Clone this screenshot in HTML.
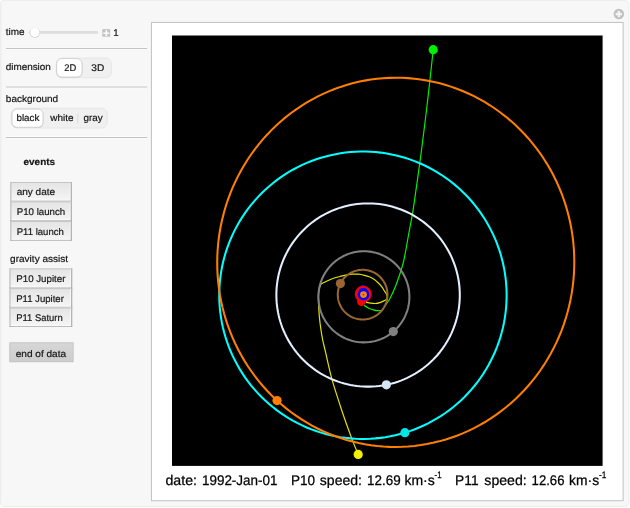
<!DOCTYPE html>
<html><head><meta charset="utf-8"><title>Pioneer 10 and 11</title>
<style>
html,body{margin:0;padding:0;background:#fff;}
body{width:630px;height:508px;position:relative;overflow:hidden;font-family:"Liberation Sans",Arial,sans-serif;}
.abs{position:absolute;box-sizing:border-box;}
</style></head><body>
<svg width="630" height="508" viewBox="0 0 630 508" style="position:absolute;left:0;top:0;will-change:transform">
<defs><clipPath id="pc"><rect x="172" y="35.5" width="430.6" height="430.4"/></clipPath><linearGradient id="bg" x1="0" y1="0" x2="0" y2="1"><stop offset="0" stop-color="#fbfbfb"/><stop offset="1" stop-color="#ebebeb"/></linearGradient></defs>
<rect x="0.45" y="0.4" width="628.3" height="506.1" rx="3.5" fill="#f7f7f7" stroke="#ebebeb" stroke-width="0.9"/>
<rect x="0.3" y="4" width="1.4" height="499" fill="#efefef"/>
<rect x="151.45" y="22.45" width="471.65" height="478.25" fill="#ffffff" stroke="#c4c4c4" stroke-width="1.05"/>
<rect x="172" y="35.5" width="430.6" height="430.4" fill="#000"/>
<g clip-path="url(#pc)" fill="none">
<circle cx="362.99" cy="289.72" r="4.4" fill="#0000ff"/>
<path d="M369.83 297.03 L370.10 296.32 L370.30 295.59 L370.42 294.84 L370.45 294.08 L370.41 293.32 L370.29 292.57 L370.09 291.83 L369.82 291.13 L369.47 290.45 L369.05 289.81 L368.57 289.22 L368.03 288.68 L367.44 288.21 L366.80 287.79 L366.12 287.45 L365.41 287.17 L364.67 286.98 L363.92 286.86 L363.16 286.82 L362.40 286.86 L361.65 286.98 L360.91 287.17 L360.20 287.45 L359.53 287.79 L358.89 288.20 L358.30 288.68 L357.76 289.22 L357.28 289.81 L356.87 290.44 L356.52 291.12 L356.25 291.83 L356.06 292.56 L355.94 293.31 L355.90 294.07 L355.94 294.83 L356.07 295.58 L356.26 296.31 L356.54 297.02 L356.89 297.70 L357.30 298.34 L357.78 298.93 L358.32 299.46 L358.92 299.94 L359.56 300.36 L360.23 300.70 L360.95 300.97 L361.68 301.17 L362.44 301.29 L363.20 301.33 L363.96 301.29 L364.71 301.17 L365.44 300.98 L366.15 300.70 L366.83 300.36 L367.47 299.95 L368.06 299.47 L368.60 298.93 L369.07 298.34 L369.49 297.70Z" fill="#ff0000"/>
<circle cx="361.30" cy="301.70" r="4.2" fill="#ff0000"/>
<circle cx="362.99" cy="289.72" r="4.4" fill="#0000ff"/>
<path d="M369.83 297.03 L370.10 296.32 L370.30 295.59 L370.42 294.84 L370.45 294.08 L370.41 293.32 L370.29 292.57 L370.09 291.83 L369.82 291.13 L369.47 290.45 L369.05 289.81 L368.57 289.22 L368.03 288.68 L367.44 288.21 L366.80 287.79 L366.12 287.45 L365.41 287.17 L364.67 286.98 L363.92 286.86 L363.16 286.82 L362.40 286.86 L361.65 286.98 L360.91 287.17 L360.20 287.45 L359.53 287.79 L358.89 288.20 L358.30 288.68 L357.76 289.22 L357.28 289.81 L356.87 290.44 L356.52 291.12 L356.25 291.83 L356.06 292.56 L355.94 293.31 L355.90 294.07 L355.94 294.83 L356.07 295.58 L356.26 296.31 L356.54 297.02 L356.89 297.70 L357.30 298.34 L357.78 298.93 L358.32 299.46 L358.92 299.94 L359.56 300.36 L360.23 300.70 L360.95 300.97 L361.68 301.17 L362.44 301.29 L363.20 301.33 L363.96 301.29 L364.71 301.17 L365.44 300.98 L366.15 300.70 L366.83 300.36 L367.47 299.95 L368.06 299.47 L368.60 298.93 L369.07 298.34 L369.49 297.70Z" stroke="#ff0000" stroke-width="2.1"/>
<circle cx="363.50" cy="294.55" r="5.85" fill="#0000ff"/>
<circle cx="363.50" cy="294.55" r="3.4" fill="#ff8000"/>
<circle cx="363.50" cy="294.55" r="0.9" fill="#5a3fd8"/>
<path d="M363.90 305.20 C364.80 305.75 367.62 307.68 369.30 308.50 C370.98 309.32 372.55 309.73 374.00 310.10 C375.45 310.47 376.73 310.62 378.00 310.70 C379.27 310.78 381.00 310.62 381.60 310.60" stroke="#00f000" stroke-width="1.2"/>
<path d="M381.60 310.60 C381.90 310.27 382.82 309.42 383.40 308.60 C383.98 307.78 384.40 306.77 385.10 305.70 C385.80 304.63 386.82 303.35 387.60 302.20 C388.38 301.05 389.28 299.68 389.80 298.80 C390.32 297.92 389.90 298.60 390.70 296.90 C391.50 295.20 393.18 292.08 394.60 288.60 C396.02 285.12 397.93 279.68 399.20 276.00 C400.47 272.32 401.42 269.17 402.20 266.50 C402.98 263.83 403.20 263.25 403.90 260.00 C404.60 256.75 405.62 251.25 406.40 247.00 C407.18 242.75 407.57 240.13 408.60 234.50 C409.63 228.87 411.30 221.08 412.60 213.20 C413.90 205.32 415.22 195.47 416.40 187.20 C417.58 178.93 418.63 171.47 419.70 163.60 C420.77 155.73 421.67 148.93 422.80 140.00 C423.93 131.07 425.30 120.10 426.50 110.00 C427.70 99.90 428.88 89.45 430.00 79.40 C431.12 69.35 432.67 54.65 433.20 49.70" stroke="#00f000" stroke-width="1.2"/>
<path d="M365.90 302.20 C366.65 302.35 368.85 302.88 370.40 303.10 C371.95 303.32 373.62 303.58 375.20 303.50 C376.78 303.42 378.53 303.00 379.90 302.60 C381.27 302.20 382.22 301.67 383.40 301.10 C384.58 300.53 386.40 299.52 387.00 299.20" stroke="#e2e200" stroke-width="1.2"/>
<path d="M387.00 299.20 C387.03 298.82 387.37 297.88 387.20 296.90 C387.03 295.92 386.53 294.42 386.00 293.30 C385.47 292.18 384.72 291.32 384.00 290.20 C383.28 289.08 382.68 287.85 381.70 286.60 C380.72 285.35 379.38 283.93 378.10 282.70 C376.82 281.47 375.47 280.18 374.00 279.20 C372.53 278.22 370.88 277.45 369.30 276.80 C367.72 276.15 366.28 275.73 364.50 275.30 C362.72 274.87 360.57 274.38 358.60 274.20 C356.63 274.02 354.67 274.08 352.70 274.20 C350.73 274.32 348.77 274.57 346.80 274.90 C344.83 275.23 342.87 275.72 340.90 276.20 C338.93 276.68 337.30 277.00 335.00 277.80 C332.70 278.60 329.42 279.98 327.10 281.00 C324.78 282.02 322.10 283.42 321.10 283.90" stroke="#e2e200" stroke-width="1.2"/>
<path d="M321.20 283.80 C320.95 284.33 320.08 285.88 319.70 287.00 C319.32 288.12 319.10 289.33 318.90 290.50 C318.70 291.67 318.58 292.92 318.50 294.00 C318.42 295.08 318.40 295.83 318.40 297.00 C318.40 298.17 318.47 299.63 318.50 301.00 C318.53 302.37 318.43 302.32 318.60 305.20 C318.77 308.08 319.12 314.28 319.50 318.30 C319.88 322.32 320.37 325.68 320.90 329.30 C321.43 332.92 322.00 336.52 322.70 340.00 C323.40 343.48 323.58 343.75 325.10 350.20 C326.62 356.65 329.02 368.65 331.80 378.70 C334.58 388.75 338.45 400.47 341.80 410.50 C345.15 420.53 349.17 431.58 351.90 438.90 C354.63 446.22 357.15 451.82 358.20 454.40" stroke="#e2e200" stroke-width="1.2"/>
<path d="M386.68 288.33 L386.45 287.50 L386.18 286.67 L385.89 285.86 L385.57 285.05 L385.22 284.26 L384.84 283.48 L384.44 282.71 L384.01 281.96 L383.55 281.22 L383.07 280.50 L382.57 279.79 L382.04 279.11 L381.48 278.44 L380.90 277.80 L380.30 277.17 L379.68 276.56 L379.04 275.98 L378.38 275.42 L377.70 274.88 L377.00 274.37 L376.28 273.88 L375.55 273.42 L374.80 272.98 L374.03 272.57 L373.26 272.19 L372.46 271.83 L371.66 271.50 L370.85 271.20 L370.02 270.93 L369.19 270.69 L368.35 270.48 L367.50 270.29 L366.65 270.14 L365.79 270.01 L364.93 269.92 L364.06 269.85 L363.19 269.82 L362.33 269.82 L361.46 269.84 L360.59 269.90 L359.73 269.99 L358.87 270.10 L358.01 270.25 L357.16 270.43 L356.32 270.63 L355.49 270.87 L354.66 271.13 L353.84 271.42 L353.04 271.74 L352.24 272.09 L351.46 272.47 L350.69 272.87 L349.94 273.30 L349.20 273.76 L348.48 274.24 L347.77 274.75 L347.09 275.28 L346.42 275.83 L345.77 276.41 L345.14 277.01 L344.54 277.63 L343.95 278.27 L343.39 278.94 L342.86 279.62 L342.34 280.32 L341.85 281.03 L341.39 281.77 L340.95 282.51 L340.54 283.28 L340.16 284.06 L339.80 284.85 L339.47 285.65 L339.17 286.46 L338.90 287.29 L338.65 288.12 L338.44 288.96 L338.26 289.81 L338.10 290.66 L337.98 291.52 L337.88 292.38 L337.82 293.24 L337.78 294.11 L337.78 294.98 L337.80 295.84 L337.86 296.71 L337.95 297.57 L338.06 298.43 L338.21 299.29 L338.38 300.14 L338.59 300.98 L338.83 301.81 L339.09 302.64 L339.38 303.45 L339.70 304.26 L340.05 305.05 L340.43 305.83 L340.83 306.60 L341.26 307.35 L341.72 308.09 L342.20 308.81 L342.71 309.52 L343.24 310.20 L343.79 310.87 L344.37 311.52 L344.97 312.14 L345.59 312.75 L346.23 313.33 L346.89 313.89 L347.58 314.43 L348.28 314.94 L348.99 315.43 L349.73 315.89 L350.48 316.33 L351.24 316.74 L352.02 317.12 L352.81 317.48 L353.61 317.81 L354.43 318.11 L355.25 318.38 L356.08 318.62 L356.92 318.84 L357.77 319.02 L358.63 319.17 L359.48 319.30 L360.35 319.39 L361.21 319.46 L362.08 319.49 L362.95 319.50 L363.81 319.47 L364.68 319.41 L365.54 319.33 L366.40 319.21 L367.26 319.06 L368.11 318.89 L368.95 318.68 L369.79 318.45 L370.61 318.18 L371.43 317.89 L372.24 317.57 L373.03 317.22 L373.81 316.84 L374.58 316.44 L375.33 316.01 L376.07 315.55 L376.79 315.07 L377.50 314.56 L378.19 314.03 L378.85 313.48 L379.50 312.90 L380.13 312.30 L380.73 311.68 L381.32 311.04 L381.88 310.38 L382.42 309.70 L382.93 309.00 L383.42 308.28 L383.88 307.55 L384.32 306.80 L384.73 306.03 L385.12 305.26 L385.47 304.47 L385.80 303.66 L386.10 302.85 L386.38 302.03 L386.62 301.19 L386.83 300.35 L387.02 299.51 L387.17 298.65 L387.30 297.79 L387.39 296.93 L387.46 296.07 L387.49 295.20 L387.50 294.33 L387.47 293.47 L387.41 292.60 L387.33 291.74 L387.21 290.88 L387.06 290.03 L386.89 289.18Z" stroke="#996633" stroke-width="2.05"/>
<circle cx="340.41" cy="283.54" r="4.6" fill="#996633"/>
<path d="M361.83 251.27 L360.25 251.37 L358.67 251.52 L357.09 251.73 L355.53 252.00 L353.97 252.32 L352.43 252.69 L350.90 253.12 L349.39 253.60 L347.89 254.13 L346.42 254.72 L344.96 255.35 L343.53 256.04 L342.12 256.78 L340.74 257.56 L339.39 258.39 L338.07 259.27 L336.78 260.20 L335.52 261.17 L334.30 262.18 L333.11 263.24 L331.96 264.34 L330.85 265.47 L329.78 266.65 L328.75 267.86 L327.77 269.10 L326.83 270.38 L325.93 271.70 L325.08 273.04 L324.28 274.41 L323.52 275.81 L322.82 277.23 L322.16 278.68 L321.56 280.15 L321.01 281.64 L320.50 283.15 L320.06 284.68 L319.66 286.22 L319.32 287.77 L319.04 289.34 L318.81 290.91 L318.63 292.49 L318.51 294.08 L318.44 295.67 L318.43 297.26 L318.48 298.85 L318.58 300.44 L318.73 302.02 L318.94 303.60 L319.21 305.17 L319.53 306.73 L319.90 308.27 L320.33 309.80 L320.81 311.32 L321.34 312.82 L321.93 314.30 L322.56 315.76 L323.25 317.19 L323.99 318.60 L324.77 319.99 L325.60 321.34 L326.48 322.67 L327.41 323.96 L328.38 325.22 L329.39 326.45 L330.44 327.64 L331.54 328.79 L332.67 329.90 L333.85 330.98 L335.06 332.01 L336.30 333.00 L337.58 333.94 L338.89 334.84 L340.23 335.70 L341.60 336.50 L343.00 337.26 L344.42 337.97 L345.86 338.62 L347.33 339.23 L348.82 339.79 L350.33 340.29 L351.85 340.74 L353.39 341.14 L354.94 341.48 L356.50 341.77 L358.07 342.00 L359.65 342.18 L361.23 342.30 L362.82 342.37 L364.41 342.38 L365.99 342.33 L367.58 342.24 L369.16 342.08 L370.73 341.87 L372.30 341.61 L373.85 341.29 L375.39 340.91 L376.92 340.49 L378.44 340.01 L379.93 339.47 L381.41 338.89 L382.86 338.25 L384.29 337.57 L385.70 336.83 L387.08 336.04 L388.43 335.21 L389.75 334.33 L391.04 333.41 L392.30 332.44 L393.53 331.42 L394.71 330.37 L395.86 329.27 L396.97 328.13 L398.04 326.96 L399.07 325.75 L400.06 324.50 L401.00 323.22 L401.89 321.91 L402.74 320.57 L403.55 319.19 L404.30 317.79 L405.01 316.37 L405.66 314.92 L406.27 313.45 L406.82 311.96 L407.32 310.45 L407.77 308.92 L408.16 307.38 L408.50 305.83 L408.79 304.27 L409.02 302.69 L409.20 301.11 L409.32 299.53 L409.38 297.94 L409.39 296.34 L409.35 294.75 L409.25 293.17 L409.09 291.58 L408.88 290.01 L408.62 288.44 L408.30 286.88 L407.92 285.33 L407.49 283.80 L407.01 282.28 L406.48 280.78 L405.90 279.31 L405.26 277.85 L404.57 276.41 L403.84 275.00 L403.05 273.62 L402.22 272.26 L401.34 270.94 L400.42 269.64 L399.45 268.38 L398.43 267.16 L397.38 265.97 L396.28 264.81 L395.15 263.70 L393.98 262.63 L392.77 261.60 L391.52 260.61 L390.25 259.66 L388.93 258.76 L387.59 257.91 L386.22 257.10 L384.83 256.35 L383.41 255.64 L381.96 254.98 L380.49 254.37 L379.00 253.82 L377.50 253.32 L375.97 252.87 L374.44 252.47 L372.88 252.13 L371.32 251.84 L369.75 251.61 L368.17 251.43 L366.59 251.31 L365.01 251.24 L363.42 251.23Z" stroke="#808080" stroke-width="2.05"/>
<circle cx="393.32" cy="331.60" r="4.6" fill="#808080"/>
<path d="M277.50 280.61 L277.06 283.78 L276.72 286.96 L276.50 290.15 L276.38 293.35 L276.38 296.54 L276.49 299.74 L276.71 302.93 L277.04 306.11 L277.49 309.28 L278.04 312.43 L278.70 315.56 L279.48 318.66 L280.36 321.74 L281.34 324.78 L282.44 327.79 L283.63 330.75 L284.93 333.67 L286.34 336.55 L287.84 339.38 L289.44 342.15 L291.13 344.86 L292.92 347.51 L294.80 350.10 L296.77 352.62 L298.82 355.08 L300.96 357.46 L303.19 359.76 L305.49 361.98 L307.87 364.12 L310.32 366.18 L312.84 368.15 L315.43 370.04 L318.08 371.83 L320.79 373.52 L323.56 375.13 L326.39 376.63 L329.27 378.03 L332.19 379.34 L335.16 380.54 L338.16 381.63 L341.21 382.63 L344.29 383.51 L347.39 384.29 L350.52 384.96 L353.67 385.51 L356.84 385.96 L360.03 386.30 L363.22 386.52 L366.42 386.64 L369.62 386.64 L372.82 386.53 L376.01 386.31 L379.20 385.98 L382.37 385.54 L385.52 384.99 L388.65 384.33 L391.76 383.56 L394.84 382.68 L397.88 381.69 L400.89 380.60 L403.86 379.41 L406.79 378.11 L409.66 376.71 L412.49 375.21 L415.27 373.61 L417.98 371.92 L420.64 370.13 L423.23 368.26 L425.75 366.29 L428.21 364.24 L430.59 362.10 L432.89 359.88 L435.12 357.58 L437.26 355.21 L439.32 352.76 L441.29 350.24 L443.17 347.66 L444.97 345.01 L446.66 342.30 L448.27 339.53 L449.77 336.70 L451.18 333.83 L452.48 330.91 L453.68 327.95 L454.78 324.94 L455.77 321.90 L456.65 318.83 L457.43 315.73 L458.10 312.60 L458.66 309.45 L459.10 306.28 L459.44 303.10 L459.67 299.91 L459.78 296.72 L459.78 293.52 L459.67 290.32 L459.45 287.13 L459.12 283.95 L458.67 280.78 L458.12 277.63 L457.46 274.51 L456.68 271.40 L455.80 268.33 L454.82 265.28 L453.72 262.28 L452.53 259.31 L451.23 256.39 L449.83 253.51 L448.32 250.69 L446.73 247.92 L445.03 245.20 L443.24 242.55 L441.36 239.96 L439.39 237.44 L437.34 234.99 L435.20 232.61 L432.97 230.31 L430.67 228.08 L428.30 225.94 L425.84 223.88 L423.32 221.91 L420.73 220.03 L418.08 218.24 L415.37 216.54 L412.60 214.94 L409.77 213.43 L406.89 212.03 L403.97 210.73 L401.00 209.52 L398.00 208.43 L394.95 207.44 L391.88 206.55 L388.77 205.78 L385.64 205.11 L382.49 204.55 L379.32 204.10 L376.13 203.76 L372.94 203.54 L369.74 203.42 L366.54 203.42 L363.34 203.53 L360.15 203.75 L356.96 204.08 L353.79 204.52 L350.64 205.07 L347.51 205.74 L344.40 206.51 L341.32 207.39 L338.28 208.37 L335.27 209.46 L332.30 210.66 L329.37 211.96 L326.50 213.35 L323.67 214.85 L320.90 216.45 L318.18 218.14 L315.52 219.93 L312.93 221.81 L310.41 223.77 L307.96 225.83 L305.58 227.96 L303.27 230.18 L301.05 232.48 L298.90 234.86 L296.84 237.30 L294.87 239.82 L292.99 242.41 L291.19 245.06 L289.50 247.77 L287.89 250.54 L286.39 253.36 L284.98 256.23 L283.68 259.15 L282.48 262.12 L281.38 265.12 L280.39 268.16 L279.51 271.23 L278.73 274.34 L278.06 277.46Z" stroke="#e3efff" stroke-width="2.05"/>
<circle cx="386.36" cy="384.82" r="4.6" fill="#d6e6f7"/>
<path d="M464.57 193.69 L460.97 190.21 L457.24 186.85 L453.40 183.62 L449.45 180.53 L445.39 177.58 L441.24 174.77 L436.98 172.11 L432.64 169.60 L428.21 167.24 L423.71 165.04 L419.12 162.99 L414.48 161.11 L409.76 159.39 L404.99 157.84 L400.17 156.45 L395.31 155.23 L390.40 154.18 L385.46 153.31 L380.50 152.61 L375.51 152.08 L370.50 151.72 L365.49 151.55 L360.48 151.54 L355.46 151.71 L350.46 152.06 L345.47 152.58 L340.50 153.27 L335.56 154.14 L330.66 155.18 L325.79 156.39 L320.97 157.77 L316.20 159.31 L311.48 161.02 L306.83 162.90 L302.25 164.93 L297.74 167.13 L293.31 169.48 L288.97 171.98 L284.71 174.64 L280.55 177.44 L276.50 180.39 L272.54 183.47 L268.70 186.69 L264.97 190.04 L261.36 193.53 L257.87 197.13 L254.52 200.86 L251.29 204.70 L248.20 208.65 L245.25 212.70 L242.45 216.86 L239.79 221.11 L237.28 225.45 L234.92 229.88 L232.72 234.38 L230.68 238.96 L228.80 243.61 L227.08 248.32 L225.53 253.09 L224.14 257.91 L222.93 262.78 L221.88 267.69 L221.01 272.62 L220.31 277.59 L219.79 282.58 L219.43 287.58 L219.26 292.59 L219.25 297.61 L219.43 302.62 L219.78 307.63 L220.30 312.62 L220.99 317.58 L221.86 322.52 L222.90 327.43 L224.11 332.30 L225.50 337.12 L227.04 341.89 L228.76 346.61 L230.63 351.26 L232.67 355.84 L234.87 360.35 L237.22 364.79 L239.73 369.13 L242.38 373.39 L245.19 377.55 L248.13 381.61 L251.22 385.56 L254.44 389.41 L257.80 393.14 L261.28 396.75 L264.89 400.24 L268.61 403.60 L272.45 406.82 L276.40 409.91 L280.46 412.87 L284.62 415.67 L288.87 418.34 L293.21 420.85 L297.64 423.21 L302.15 425.41 L306.73 427.45 L311.38 429.34 L316.09 431.06 L320.86 432.61 L325.68 434.00 L330.55 435.21 L335.45 436.26 L340.39 437.14 L345.36 437.84 L350.35 438.37 L355.35 438.72 L360.36 438.90 L365.38 438.90 L370.39 438.73 L375.39 438.39 L380.38 437.87 L385.35 437.17 L390.29 436.31 L395.20 435.27 L400.06 434.06 L404.88 432.68 L409.65 431.13 L414.37 429.42 L419.02 427.55 L423.60 425.51 L428.11 423.32 L432.54 420.96 L436.89 418.46 L441.14 415.81 L445.30 413.00 L449.36 410.06 L453.31 406.97 L457.16 403.75 L460.88 400.40 L464.49 396.92 L467.98 393.31 L471.34 389.59 L474.56 385.75 L477.65 381.80 L480.60 377.74 L483.41 373.59 L486.07 369.34 L488.58 364.99 L490.93 360.57 L493.13 356.06 L495.18 351.48 L497.06 346.83 L498.77 342.12 L500.32 337.35 L501.71 332.53 L502.92 327.66 L503.97 322.76 L504.84 317.82 L505.54 312.85 L506.07 307.87 L506.42 302.86 L506.60 297.85 L506.60 292.83 L506.43 287.82 L506.08 282.82 L505.56 277.83 L504.86 272.86 L503.99 267.92 L502.95 263.01 L501.74 258.15 L500.36 253.32 L498.81 248.55 L497.10 243.84 L495.22 239.18 L493.18 234.60 L490.98 230.09 L488.63 225.66 L486.13 221.31 L483.47 217.06 L480.67 212.90 L477.72 208.84 L474.63 204.88 L471.41 201.04 L468.06 197.31Z" stroke="#00ffff" stroke-width="2.05"/>
<circle cx="404.89" cy="432.68" r="4.6" fill="#00e6e6"/>
<path d="M267.35 390.95 L271.75 395.50 L276.31 399.88 L281.02 404.09 L285.86 408.14 L290.84 412.00 L295.95 415.68 L301.17 419.18 L306.52 422.48 L311.97 425.59 L317.52 428.50 L323.17 431.21 L328.91 433.71 L334.73 436.01 L340.62 438.09 L346.58 439.96 L352.60 441.61 L358.67 443.04 L364.79 444.25 L370.95 445.25 L377.13 446.01 L383.34 446.56 L389.57 446.88 L395.80 446.97 L402.03 446.85 L408.25 446.49 L414.46 445.91 L420.65 445.11 L426.80 444.09 L432.92 442.84 L438.99 441.37 L445.01 439.69 L450.97 437.79 L456.86 435.67 L462.68 433.35 L468.42 430.82 L474.06 428.08 L479.62 425.14 L485.07 422.00 L490.41 418.66 L495.63 415.14 L500.74 411.43 L505.71 407.54 L510.56 403.47 L515.26 399.23 L519.82 394.82 L524.22 390.25 L528.47 385.53 L532.56 380.65 L536.48 375.63 L540.23 370.48 L543.80 365.19 L547.19 359.77 L550.40 354.24 L553.42 348.60 L556.25 342.85 L558.88 337.00 L561.32 331.06 L563.55 325.04 L565.58 318.94 L567.40 312.77 L569.01 306.54 L570.41 300.26 L571.60 293.93 L572.57 287.56 L573.33 281.17 L573.87 274.74 L574.19 268.31 L574.30 261.86 L574.19 255.42 L573.86 248.99 L573.32 242.57 L572.56 236.17 L571.58 229.81 L570.39 223.49 L568.99 217.21 L567.37 210.99 L565.55 204.84 L563.52 198.75 L561.28 192.74 L558.84 186.81 L556.21 180.98 L553.38 175.25 L550.36 169.62 L547.14 164.10 L543.75 158.71 L540.17 153.44 L536.42 148.30 L532.50 143.30 L528.41 138.45 L524.16 133.75 L519.75 129.21 L515.19 124.82 L510.48 120.61 L505.64 116.57 L500.66 112.70 L495.55 109.02 L490.33 105.52 L484.98 102.22 L479.53 99.11 L473.98 96.20 L468.33 93.49 L462.59 90.99 L456.77 88.69 L450.88 86.61 L444.92 84.74 L438.90 83.09 L432.83 81.66 L426.71 80.45 L420.55 79.46 L414.37 78.69 L408.16 78.14 L401.93 77.82 L395.70 77.73 L389.47 77.86 L383.25 78.21 L377.04 78.79 L370.85 79.59 L364.70 80.62 L358.58 81.86 L352.51 83.33 L346.49 85.01 L340.53 86.91 L334.64 89.03 L328.82 91.35 L323.08 93.89 L317.44 96.62 L311.88 99.57 L306.43 102.70 L301.09 106.04 L295.87 109.56 L290.76 113.27 L285.79 117.16 L280.94 121.23 L276.24 125.47 L271.69 129.88 L267.28 134.45 L263.03 139.17 L258.94 144.05 L255.02 149.07 L251.27 154.22 L247.70 159.51 L244.31 164.93 L241.10 170.46 L238.08 176.10 L235.25 181.85 L232.62 187.70 L230.18 193.64 L227.95 199.66 L225.92 205.76 L224.10 211.93 L222.49 218.16 L221.09 224.44 L219.90 230.77 L218.93 237.14 L218.17 243.54 L217.63 249.96 L217.31 256.39 L217.20 262.84 L217.31 269.28 L217.64 275.71 L218.18 282.13 L218.94 288.53 L219.92 294.89 L221.11 301.21 L222.52 307.49 L224.13 313.71 L225.95 319.87 L227.98 325.95 L230.22 331.96 L232.66 337.89 L235.29 343.72 L238.12 349.46 L241.15 355.08 L244.36 360.60 L247.75 365.99 L251.33 371.26 L255.08 376.40 L259.00 381.40 L263.09 386.25Z" stroke="#ff7f00" stroke-width="2.05"/>
<circle cx="277.04" cy="400.55" r="4.6" fill="#ff7f00"/>
<circle cx="433.2" cy="49.7" r="4.6" fill="#00f000"/>
<circle cx="358.2" cy="454.4" r="4.6" fill="#f2f200"/>
</g>
<defs><filter id="sh" x="-50%" y="-50%" width="200%" height="200%"><feGaussianBlur stdDeviation="0.7"/></filter></defs>
<rect x="28.8" y="31.1" width="69.4" height="2.7" rx="1.35" fill="#dddddd"/>
<circle cx="34.9" cy="32.8" r="5.0" fill="#000" opacity="0.22" filter="url(#sh)"/>
<circle cx="34.9" cy="32.5" r="4.75" fill="#ffffff"/>
<rect x="102.3" y="29.1" width="7.8" height="7.6" fill="#c2c2c2"/>
<rect x="103.2" y="32.45" width="6.1" height="1.55" fill="#fafafa"/>
<rect x="105.55" y="30.0" width="1.6" height="6.2" fill="#fafafa"/>
<circle cx="618.85" cy="14.05" r="5.25" fill="#c0c0c0"/>
<rect x="615.65" y="12.85" width="6.4" height="2.4" fill="#f4f4f4"/>
<rect x="617.65" y="10.85" width="2.4" height="6.4" fill="#f4f4f4"/>
<rect x="5.9" y="47.00" width="141.2" height="3" fill="#fbfbfb"/>
<rect x="5.9" y="48.00" width="141.2" height="1" fill="#c3c3c3"/>
<rect x="5.9" y="85.50" width="141.2" height="3" fill="#fbfbfb"/>
<rect x="5.9" y="86.50" width="141.2" height="1" fill="#c3c3c3"/>
<rect x="5.9" y="136.00" width="141.2" height="3" fill="#fbfbfb"/>
<rect x="5.9" y="137.00" width="141.2" height="1" fill="#c3c3c3"/>
<rect x="56.30" y="58.10" width="55.20" height="19.60" rx="5.5" fill="#f0f0f0" stroke="#e5e5e5" stroke-width="0.8"/>
<rect x="56.30" y="58.70" width="26.10" height="19.20" rx="5.3" fill="#d9d9d9"/>
<rect x="56.65" y="58.55" width="25.40" height="18.50" rx="5" fill="#ffffff" stroke="#cecece" stroke-width="0.9"/>
<rect x="11.30" y="108.30" width="96.00" height="19.70" rx="5.5" fill="#f0f0f0" stroke="#e5e5e5" stroke-width="0.8"/>
<rect x="11.60" y="109.20" width="31.80" height="18.90" rx="5.3" fill="#d9d9d9"/>
<rect x="11.95" y="109.05" width="31.10" height="18.20" rx="5" fill="#ffffff" stroke="#cecece" stroke-width="0.9"/>
<rect x="77.3" y="113.5" width="1" height="10" fill="#dcdcdc"/>
<defs><linearGradient id="bt" x1="0" y1="0" x2="0" y2="1"><stop offset="0" stop-color="#e4e4e4"/><stop offset="1" stop-color="#f6f6f6"/></linearGradient><linearGradient id="bp" x1="0" y1="0" x2="0" y2="1"><stop offset="0" stop-color="#d6d6d6"/><stop offset="1" stop-color="#cdcdcd"/></linearGradient></defs>
<rect x="10.10" y="182.10" width="61.90" height="19.40" fill="url(#bt)"/>
<rect x="10.10" y="199.60" width="61.90" height="1.10" fill="#fbfbfb"/>
<rect x="69.70" y="182.10" width="1.10" height="19.40" fill="#f8f8f8"/>
<rect x="10.10" y="182.10" width="61.90" height="0.80" fill="#bdbdbd"/>
<rect x="10.10" y="182.10" width="1.40" height="19.40" fill="#c6c6c6"/>
<rect x="70.70" y="182.10" width="1.30" height="19.40" fill="#b4b4b4"/>
<rect x="10.10" y="200.70" width="61.90" height="0.80" fill="#adadad"/>
<rect x="10.10" y="201.50" width="61.90" height="19.70" fill="url(#bt)"/>
<rect x="10.10" y="219.30" width="61.90" height="1.10" fill="#fbfbfb"/>
<rect x="69.70" y="201.50" width="1.10" height="19.70" fill="#f8f8f8"/>
<rect x="10.10" y="201.50" width="61.90" height="0.80" fill="#bdbdbd"/>
<rect x="10.10" y="201.50" width="1.40" height="19.70" fill="#c6c6c6"/>
<rect x="70.70" y="201.50" width="1.30" height="19.70" fill="#b4b4b4"/>
<rect x="10.10" y="220.40" width="61.90" height="0.80" fill="#adadad"/>
<rect x="10.10" y="221.20" width="61.90" height="19.50" fill="url(#bt)"/>
<rect x="10.10" y="238.80" width="61.90" height="1.10" fill="#fbfbfb"/>
<rect x="69.70" y="221.20" width="1.10" height="19.50" fill="#f8f8f8"/>
<rect x="10.10" y="221.20" width="61.90" height="0.80" fill="#bdbdbd"/>
<rect x="10.10" y="221.20" width="1.40" height="19.50" fill="#c6c6c6"/>
<rect x="70.70" y="221.20" width="1.30" height="19.50" fill="#b4b4b4"/>
<rect x="10.10" y="239.90" width="61.90" height="0.80" fill="#adadad"/>
<rect x="9.30" y="268.50" width="63.00" height="19.80" fill="url(#bt)"/>
<rect x="9.30" y="286.40" width="63.00" height="1.10" fill="#fbfbfb"/>
<rect x="70.00" y="268.50" width="1.10" height="19.80" fill="#f8f8f8"/>
<rect x="9.30" y="268.50" width="63.00" height="0.80" fill="#bdbdbd"/>
<rect x="9.30" y="268.50" width="1.40" height="19.80" fill="#c6c6c6"/>
<rect x="71.00" y="268.50" width="1.30" height="19.80" fill="#b4b4b4"/>
<rect x="9.30" y="287.50" width="63.00" height="0.80" fill="#adadad"/>
<rect x="9.30" y="288.30" width="63.00" height="19.30" fill="url(#bt)"/>
<rect x="9.30" y="305.70" width="63.00" height="1.10" fill="#fbfbfb"/>
<rect x="70.00" y="288.30" width="1.10" height="19.30" fill="#f8f8f8"/>
<rect x="9.30" y="288.30" width="63.00" height="0.80" fill="#bdbdbd"/>
<rect x="9.30" y="288.30" width="1.40" height="19.30" fill="#c6c6c6"/>
<rect x="71.00" y="288.30" width="1.30" height="19.30" fill="#b4b4b4"/>
<rect x="9.30" y="306.80" width="63.00" height="0.80" fill="#adadad"/>
<rect x="9.30" y="307.60" width="63.00" height="19.20" fill="url(#bt)"/>
<rect x="9.30" y="324.90" width="63.00" height="1.10" fill="#fbfbfb"/>
<rect x="70.00" y="307.60" width="1.10" height="19.20" fill="#f8f8f8"/>
<rect x="9.30" y="307.60" width="63.00" height="0.80" fill="#bdbdbd"/>
<rect x="9.30" y="307.60" width="1.40" height="19.20" fill="#c6c6c6"/>
<rect x="71.00" y="307.60" width="1.30" height="19.20" fill="#b4b4b4"/>
<rect x="9.30" y="326.00" width="63.00" height="0.80" fill="#adadad"/>
<rect x="9.30" y="342.30" width="64.30" height="19.90" fill="#bfbfbf"/>
<rect x="10.20" y="343.20" width="62.60" height="18.20" fill="url(#bp)"/>
<g id="ltxt" font-family="Liberation Sans, Arial, sans-serif" font-size="9.7" fill="#161616" stroke="#161616" stroke-width="0.2" text-rendering="geometricPrecision">
<text id="t_time" x="5.82" y="35.00" textLength="18.77" lengthAdjust="spacingAndGlyphs">time</text>
<text id="t_one" x="113.18" y="36.00" textLength="5.39" lengthAdjust="spacingAndGlyphs">1</text>
<text id="t_dim" x="5.73" y="70.00" textLength="45.13" lengthAdjust="spacingAndGlyphs">dimension</text>
<text id="t_d2" x="64.31" y="71.00" textLength="11.98" lengthAdjust="spacingAndGlyphs">2D</text>
<text id="t_d3" x="91.29" y="71.00" textLength="12.92" lengthAdjust="spacingAndGlyphs">3D</text>
<text id="t_bg" x="5.86" y="102.00" textLength="52.33" lengthAdjust="spacingAndGlyphs">background</text>
<text id="t_black" x="16.43" y="121.00" textLength="22.99" lengthAdjust="spacingAndGlyphs">black</text>
<text id="t_white" x="50.24" y="121.00" textLength="23.21" lengthAdjust="spacingAndGlyphs">white</text>
<text id="t_gray" x="83.43" y="121.00" textLength="19.22" lengthAdjust="spacingAndGlyphs">gray</text>
<text id="t_events" x="23.51" y="165.00" font-weight="bold" textLength="31.60" lengthAdjust="spacingAndGlyphs">events</text>
<text id="t_anydate" x="16.65" y="195.00" textLength="38.48" lengthAdjust="spacingAndGlyphs">any date</text>
<text id="t_p10l" x="16.78" y="215.00" textLength="48.48" lengthAdjust="spacingAndGlyphs">P10 launch</text>
<text id="t_p11l" x="16.69" y="235.00" textLength="47.11" lengthAdjust="spacingAndGlyphs">P11 launch</text>
<text id="t_grav" x="10.08" y="262.00" textLength="58.06" lengthAdjust="spacingAndGlyphs">gravity assist</text>
<text id="t_p10j" x="16.29" y="282.00" textLength="49.09" lengthAdjust="spacingAndGlyphs">P10 Jupiter</text>
<text id="t_p11j" x="16.13" y="302.00" textLength="47.77" lengthAdjust="spacingAndGlyphs">P11 Jupiter</text>
<text id="t_p11s" x="16.26" y="321.00" textLength="46.45" lengthAdjust="spacingAndGlyphs">P11 Saturn</text>
<text id="t_eod" x="15.71" y="357.00" textLength="50.39" lengthAdjust="spacingAndGlyphs">end of data</text>
</g>
<g id="btxt" font-family="Liberation Sans, Arial, sans-serif" fill="#000" stroke="#000" stroke-width="0.25" text-rendering="geometricPrecision">
<text font-size="14"><tspan id="t_date" x="165.49" y="485.00" font-size="14" textLength="31.43" lengthAdjust="spacingAndGlyphs">date:</tspan> <tspan id="t_datev" x="201.91" y="485.00" font-size="14" textLength="75.64" lengthAdjust="spacingAndGlyphs">1992-Jan-01</tspan></text>
<text font-size="14"><tspan id="t_p10n" x="290.92" y="485.00" font-size="14" textLength="24.15" lengthAdjust="spacingAndGlyphs">P10</tspan> <tspan id="t_p10sp" x="319.85" y="485.00" font-size="14" textLength="42.19" lengthAdjust="spacingAndGlyphs">speed:</tspan> <tspan id="t_p10v" x="367.03" y="485.00" font-size="14" textLength="33.67" lengthAdjust="spacingAndGlyphs">12.69</tspan> <tspan id="t_p10u" x="404.42" y="485.00" font-size="14" textLength="30.35" lengthAdjust="spacingAndGlyphs">km·s</tspan><tspan id="t_p10sup" x="434.61" y="478.00" font-size="9.3" textLength="7.02" lengthAdjust="spacingAndGlyphs">-1</tspan></text>
<text font-size="14"><tspan id="t_p11n" x="455.11" y="485.00" font-size="14" textLength="23.49" lengthAdjust="spacingAndGlyphs">P11</tspan> <tspan id="t_p11sp" x="484.36" y="485.00" font-size="14" textLength="42.37" lengthAdjust="spacingAndGlyphs">speed:</tspan> <tspan id="t_p11v" x="531.62" y="485.00" font-size="14" textLength="32.85" lengthAdjust="spacingAndGlyphs">12.66</tspan> <tspan id="t_p11u" x="569.12" y="485.00" font-size="14" textLength="30.01" lengthAdjust="spacingAndGlyphs">km·s</tspan><tspan id="t_p11sup" x="599.10" y="478.00" font-size="9.3" textLength="7.43" lengthAdjust="spacingAndGlyphs">-1</tspan></text>
</g>
</svg>
</body></html>
